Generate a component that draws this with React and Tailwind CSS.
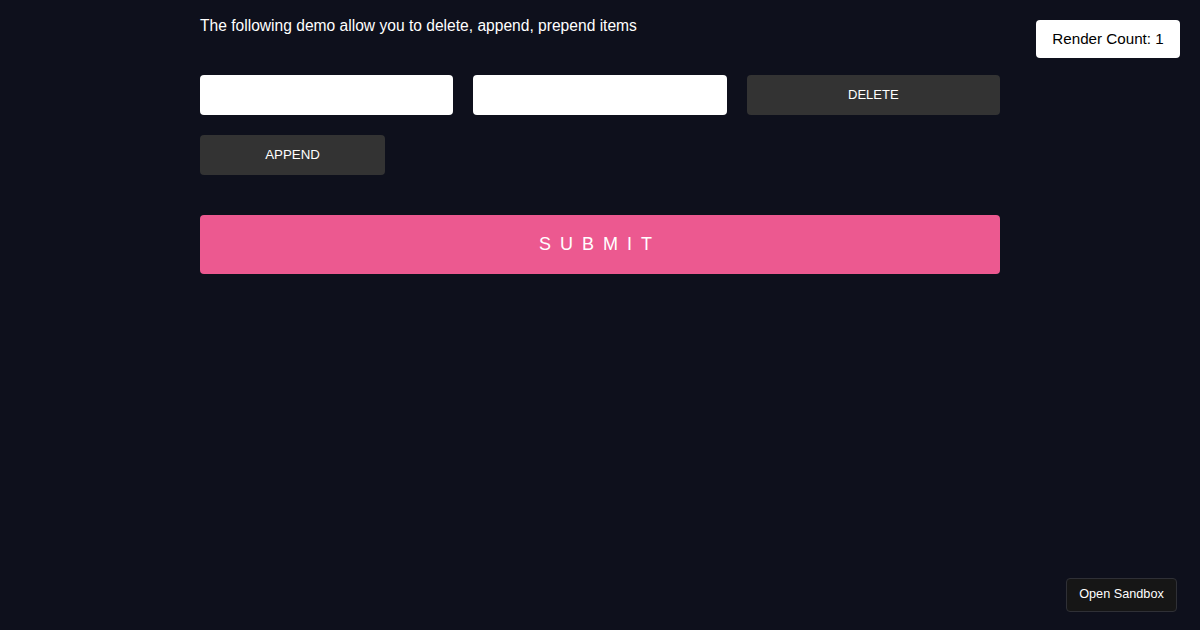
import React from 'react';

export default function App() {
    return (
        <div className="relative h-[630px] w-[1200px] overflow-hidden bg-[#0e101c] text-white" style={{ fontFamily: '"Liberation Sans", Arial, sans-serif' }}>
            <div className="absolute right-5 top-5 flex h-[38px] w-[144px] items-center justify-center rounded bg-white text-[15.2px] text-black">
                Render Count: 1
            </div>

            <div className="mx-auto w-[800px] pt-[17px]">
                <p className="text-[15.6px] leading-[18px] text-white">The following demo allow you to delete, append, prepend items</p>

                <div className="mt-10 grid grid-cols-3 gap-5">
                    <input className="h-10 rounded bg-white px-3 text-black outline-none" />
                    <input className="h-10 rounded bg-white px-3 text-black outline-none" />
                    <button className="h-10 rounded bg-[#333333] text-[13px] uppercase text-white">Delete</button>
                </div>

                <div className="mt-5">
                    <button className="h-10 w-[185px] rounded bg-[#333333] text-[13.3px] uppercase text-white">Append</button>
                </div>

                <button className="mt-10 h-[59px] w-full rounded bg-[#ec5990] text-[18px] uppercase tracking-[9px] text-white">
                    Submit
                </button>
            </div>

            <button className="absolute bottom-[18px] right-[23px] flex h-[34px] w-[111px] items-center justify-center rounded border border-[#2f3036] bg-[#161616] text-[12.7px] text-white">
                Open Sandbox
            </button>
        </div>
    );
}
